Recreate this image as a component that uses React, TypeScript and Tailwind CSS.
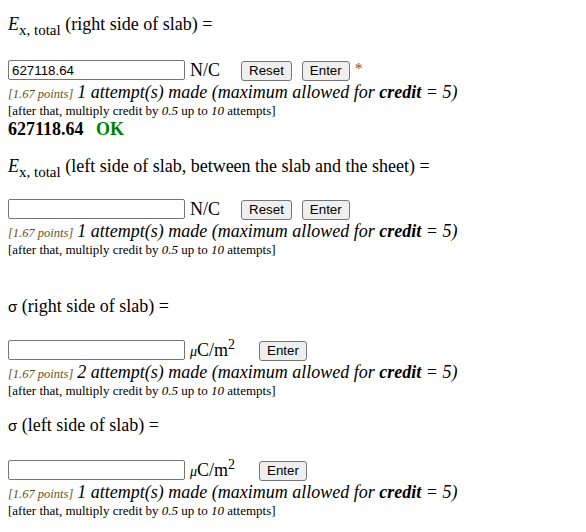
import React from 'react'

const serif = "font-[family-name:'Liberation_Serif','Times_New_Roman',serif]"
const sans = "font-[family-name:'Liberation_Sans',Arial,sans-serif]"

function Btn({ label }: { label: string }) {
  return (
    <button
      type="button"
      className={`${sans} h-[20px] px-[7px] text-[13.33px] leading-none text-black bg-[#efefef] border border-[#767676] rounded-[3px]`}
    >
      {label}
    </button>
  )
}

function Attempts({ n }: { n: number }) {
  return (
    <>
      <div className="h-[20px] mt-[2px] leading-[20px] whitespace-nowrap">
        <i className="text-[12.5px] text-[#6b5020]">[1.67 points]</i>{' '}
        <i className="text-[18px]">
          {n} attempt(s) made (maximum allowed for <b>credit</b> = 5)
        </i>
      </div>
      <div className="h-[17px] leading-[17px] text-[13px] whitespace-nowrap">
        [after that, multiply credit by <i>0.5</i> up to <i>10</i> attempts]
      </div>
    </>
  )
}

function ELabel({ text }: { text: string }) {
  return (
    <div className="h-[26px] leading-[24px] text-[18px] whitespace-nowrap">
      <i>E</i>
      <sub className="text-[15px] bottom-[-5px]">x, total</sub> {text}
    </div>
  )
}

function SigmaLabel({ text }: { text: string }) {
  return (
    <div className="h-[26px] leading-[24px] text-[18px] whitespace-nowrap">
      <span className={`${sans} text-[15px]`}>σ</span> {text}
    </div>
  )
}

function Field({ value }: { value?: string }) {
  return (
    <input
      readOnly
      value={value ?? ''}
      className={`${sans} w-[177px] h-[20px] px-[3px] text-[13.33px] text-black bg-white border border-[#767676] rounded-[2px] outline-none`}
    />
  )
}

function Micro() {
  return (
    <span className="ml-[5px] text-[18px] leading-none whitespace-nowrap">
      <i className="text-[14px]">μ</i>C/m<sup className="text-[14px]">2</sup>
    </span>
  )
}

export default function App() {
  return (
    <div className={`${serif} min-h-[532px] w-[586px] bg-white text-black pl-[8px] pt-[12px]`}>
      <ELabel text="(right side of slab) =" />
      <div className="mt-[22px] h-[20px] flex items-center">
        <Field value="627118.64" />
        <span className="ml-[5px] text-[18px] leading-none">N/C</span>
        <span className="ml-[21px]"><Btn label="Reset" /></span>
        <span className="ml-[10px]"><Btn label="Enter" /></span>
        <span className="ml-[5px] self-start -mt-[3px] text-[16px] text-[#8b5a2b]">*</span>
      </div>
      <Attempts n={1} />
      <div className="h-[20px] leading-[20px] text-[18px] font-bold whitespace-nowrap">
        627118.64 <span className="ml-[8px] text-[#008000]">OK</span>
      </div>

      <div className="mt-[15px]">
        <ELabel text="(left side of slab, between the slab and the sheet) =" />
      </div>
      <div className="mt-[19px] h-[20px] flex items-center">
        <Field />
        <span className="ml-[5px] text-[18px] leading-none">N/C</span>
        <span className="ml-[21px]"><Btn label="Reset" /></span>
        <span className="ml-[10px]"><Btn label="Enter" /></span>
      </div>
      <Attempts n={1} />

      <div className="mt-[36px]">
        <SigmaLabel text="(right side of slab) =" />
      </div>
      <div className="mt-[20px] h-[20px] flex items-center">
        <Field />
        <Micro />
        <span className="ml-[24px]"><Btn label="Enter" /></span>
      </div>
      <Attempts n={2} />

      <div className="mt-[14px]">
        <SigmaLabel text="(left side of slab) =" />
      </div>
      <div className="mt-[21px] h-[20px] flex items-center">
        <Field />
        <Micro />
        <span className="ml-[24px]"><Btn label="Enter" /></span>
      </div>
      <Attempts n={1} />
    </div>
  )
}
